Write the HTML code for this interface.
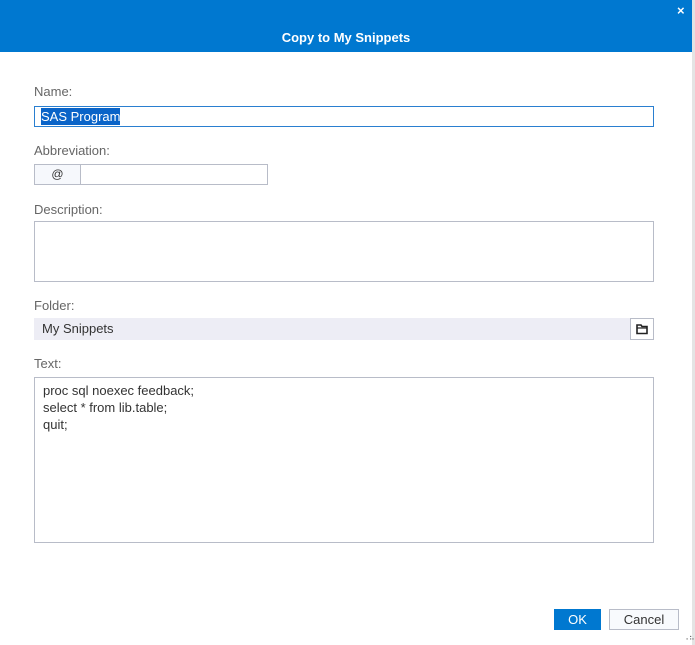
<!DOCTYPE html><html><head><style>
body{margin:0;width:695px;height:645px;background:#fff;font-family:"Liberation Sans",sans-serif;position:relative;overflow:hidden}
.a{position:absolute;box-sizing:border-box}
.lbl{font-size:13px;color:#666}
.bx{border:1px solid #b8bcc8;background:#fff}
</style></head><body>
<div class="a" style="left:0;top:0;width:692px;height:52px;background:#0078d0"></div>
<div class="a" style="left:0;top:30px;width:692px;text-align:center;color:#fff;font-size:13px;font-weight:bold">Copy to My Snippets</div>
<div class="a" style="left:677px;top:3px;color:#fff;font-size:13px;font-weight:bold">×</div>
<div class="a" style="left:692px;top:0;width:3px;height:645px;background:#e4e4e4"></div>
<div class="a lbl" style="left:34px;top:84px">Name:</div>
<div class="a" style="left:34px;top:106px;width:620px;height:21px;border:1px solid #2a7fd0"></div>
<div class="a" style="left:41px;top:108px;height:17px;background:#0a64c8;color:#fff;font-size:13px;line-height:17px">SAS Program</div>
<div class="a lbl" style="left:34px;top:143px">Abbreviation:</div>
<div class="a bx" style="left:34px;top:164px;width:47px;height:21px;background:#f6f8fc;text-align:center;font-size:12px;line-height:19px;color:#333">@</div>
<div class="a bx" style="left:80px;top:164px;width:188px;height:21px"></div>
<div class="a lbl" style="left:34px;top:202px">Description:</div>
<div class="a bx" style="left:34px;top:221px;width:620px;height:61px"></div>
<div class="a lbl" style="left:34px;top:298px">Folder:</div>
<div class="a" style="left:34px;top:318px;width:596px;height:22px;background:#ededf5;font-size:13px;line-height:22px;padding-left:8px;color:#333">My Snippets</div>
<div class="a bx" style="left:630px;top:318px;width:24px;height:22px">
<svg width="22" height="20" viewBox="0 0 22 20" style="position:absolute;left:0;top:0"><path d="M6 6h4l1 1.5h5v7H6z" fill="none" stroke="#222" stroke-width="1.6"/><path d="M6 9h10" stroke="#222" stroke-width="1.2"/></svg></div>
<div class="a lbl" style="left:34px;top:356px">Text:</div>
<div class="a bx" style="left:34px;top:377px;width:620px;height:166px;padding:4px 8px;font-size:13px;line-height:17px;color:#333">proc sql noexec feedback;<br>select * from lib.table;<br>quit;</div>
<div class="a" style="left:554px;top:609px;width:47px;height:21px;background:#0078d0;color:#fff;font-size:13px;line-height:21px;text-align:center">OK</div>
<div class="a" style="left:609px;top:609px;width:70px;height:21px;border:1px solid #b8bcc8;background:#f8fafd;color:#333;font-size:13px;line-height:19px;text-align:center">Cancel</div>
<div class="a" style="left:683px;top:633px;font-size:8px;color:#666">⠠⠦</div>
</body></html>
